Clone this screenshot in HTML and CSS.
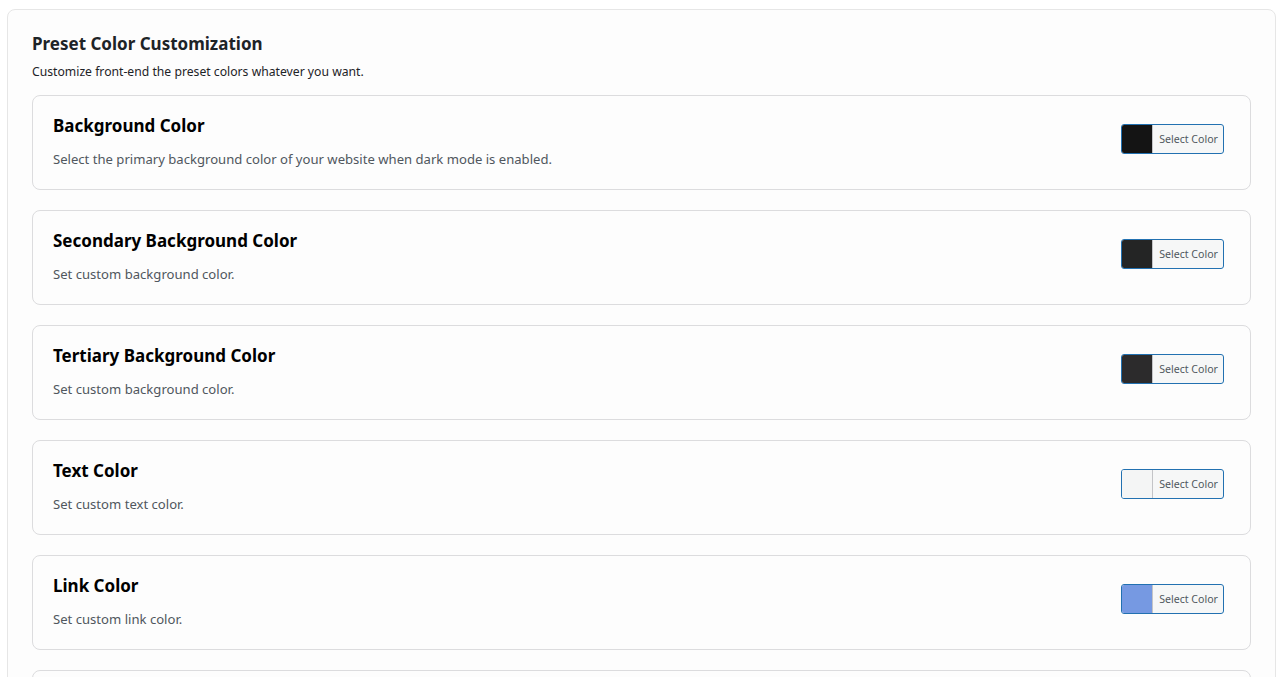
FILE: index.html
```html
<!DOCTYPE html>
<html lang="en">
<head>
<meta charset="utf-8">
<title>Preset Color Customization</title>
<link rel="stylesheet" href="styles.css">
</head>
<body>
<div class="panel">
  <h2 class="panel-title">Preset Color Customization</h2>
  <p class="panel-desc">Customize front-end the preset colors whatever you want.</p>
  <div class="rows">
    <div class="row">
      <div class="row-text">
        <h3 class="row-title">Background Color</h3>
        <p class="row-desc">Select the primary background color of your website when dark mode is enabled.</p>
      </div>
      <button class="color-btn"><span class="swatch" style="background:#141414"></span><span class="btn-label">Select Color</span></button>
    </div>
    <div class="row">
      <div class="row-text">
        <h3 class="row-title">Secondary Background Color</h3>
        <p class="row-desc">Set custom background color.</p>
      </div>
      <button class="color-btn"><span class="swatch" style="background:#242525"></span><span class="btn-label">Select Color</span></button>
    </div>
    <div class="row">
      <div class="row-text">
        <h3 class="row-title">Tertiary Background Color</h3>
        <p class="row-desc">Set custom background color.</p>
      </div>
      <button class="color-btn"><span class="swatch" style="background:#2c2b2c"></span><span class="btn-label">Select Color</span></button>
    </div>
    <div class="row">
      <div class="row-text">
        <h3 class="row-title">Text Color</h3>
        <p class="row-desc">Set custom text color.</p>
      </div>
      <button class="color-btn"><span class="swatch" style="background:#f4f5f5"></span><span class="btn-label">Select Color</span></button>
    </div>
    <div class="row">
      <div class="row-text">
        <h3 class="row-title">Link Color</h3>
        <p class="row-desc">Set custom link color.</p>
      </div>
      <button class="color-btn"><span class="swatch" style="background:#7699e2"></span><span class="btn-label">Select Color</span></button>
    </div>
    <div class="row"></div>
  </div>
</div>
</body>
</html>
```
FILE: styles.css
```css
html, body {
  margin: 0;
  padding: 0;
  background: #ffffff;
  overflow: hidden;
}
body {
  padding: 9px 7px 0 7px;
  font-family: "Noto Sans", "Open Sans", sans-serif;
  color: #1d2327;
}
.panel {
  background: #fdfdfd;
  border: 1px solid #e6e6e6;
  border-radius: 8px;
  padding: 22px 24px 40px 24px;
}
.panel-title {
  margin: 0;
  font-size: 17px;
  line-height: 24px;
  font-weight: 700;
  color: #1d2327;
}
.panel-desc {
  margin: 8px 0 0 0;
  font-size: 12.2px;
  line-height: 16px;
  color: #1d2327;
}
.rows {
  margin-top: 15px;
  display: flex;
  flex-direction: column;
  gap: 20px;
}
.row {
  height: 93px;
  border: 1px solid #dcdcde;
  border-radius: 8px;
  background: #fdfdfd;
  display: flex;
  align-items: center;
  justify-content: space-between;
  padding: 0 26px 0 20px;
}
.row-text {
  align-self: flex-start;
  padding-top: 18px;
}
.row-title {
  margin: 0;
  font-size: 17px;
  line-height: 24px;
  font-weight: 700;
  color: #000;
}
.row-desc {
  margin: 12px 0 0 0;
  font-size: 13.1px;
  line-height: 18px;
  color: #50575e;
}
.color-btn {
  display: flex;
  align-items: stretch;
  height: 30px;
  padding: 0;
  margin-top: -7px;
  border: 1px solid #2271b1;
  border-radius: 3px;
  background: #f6f7f7;
  overflow: hidden;
  cursor: pointer;
  font-family: inherit;
}
.swatch {
  width: 30px;
  border-right: 1px solid #c3c4c7;
}
.btn-label {
  display: flex;
  align-items: center;
  padding: 0 5px 0 6px;
  font-size: 10.6px;
  color: #50575e;
}
```
